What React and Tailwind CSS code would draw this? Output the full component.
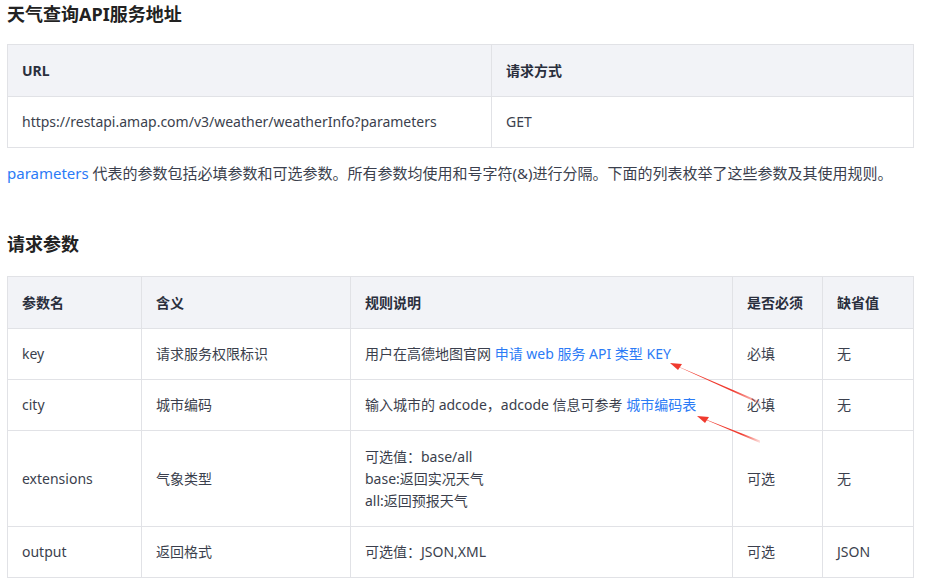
import React from 'react';

const font = { fontFamily: '"Noto Sans", "Noto Sans CJK SC", sans-serif' };

const params = [
  {
    name: 'key',
    meaning: '请求服务权限标识',
    rule: (
      <>
        用户在高德地图官网 <a className="text-[#2b7bf6]">申请 web 服务 API 类型 KEY</a>
      </>
    ),
    required: '必填',
    def: '无',
  },
  {
    name: 'city',
    meaning: '城市编码',
    rule: (
      <>
        输入城市的 adcode，adcode 信息可参考 <a className="text-[#2b7bf6]">城市编码表</a>
      </>
    ),
    required: '必填',
    def: '无',
  },
  {
    name: 'extensions',
    meaning: '气象类型',
    rule: (
      <>
        可选值：base/all
        <br />
        base:返回实况天气
        <br />
        all:返回预报天气
      </>
    ),
    required: '可选',
    def: '无',
    tall: true,
  },
  {
    name: 'output',
    meaning: '返回格式',
    rule: '可选值：JSON,XML',
    required: '可选',
    def: 'JSON',
  },
];

const th = 'border border-[#e1e2e6] bg-[#f2f3f7] px-[14px] h-[52px] text-left font-bold text-[#2a2f3d] text-[14px]';
const td = 'border border-[#e1e2e6] px-[14px] py-[14px] h-[51px] text-[14px] leading-[22px] text-[#3b3f4d]';
const tdTall = 'border border-[#e1e2e6] px-[14px] pt-[15px] pb-[14px] text-[14px] leading-[22px] text-[#3b3f4d]';

export default function App() {
  return (
    <div className="relative w-[934px] h-[587px] bg-white overflow-hidden" style={font}>
      <div className="pl-[7px] w-[914px]">
        <h2 className="text-[18px] font-bold leading-[28px] text-[#222]">天气查询API服务地址</h2>
        <table className="mt-[16px] w-[907px] border-collapse table-fixed">
          <colgroup>
            <col className="w-[484px]" />
            <col />
          </colgroup>
          <thead>
            <tr>
              <th className={th}>URL</th>
              <th className={th}>请求方式</th>
            </tr>
          </thead>
          <tbody>
            <tr>
              <td className={td}>https://restapi.amap.com/v3/weather/weatherInfo?parameters</td>
              <td className={td}>GET</td>
            </tr>
          </tbody>
        </table>

        <p className="mt-[14px] text-[15px] leading-[22px] text-[#3b3f4d] whitespace-nowrap">
          <span className="text-[#2b7bf6]">parameters</span> 代表的参数包括必填参数和可选参数。所有参数均使用和号字符(&amp;)进行分隔。下面的列表枚举了这些参数及其使用规则。
        </p>

        <h2 className="mt-[46px] text-[18px] font-bold leading-[28px] text-[#222]">请求参数</h2>

        <table className="mt-[18px] w-[907px] border-collapse table-fixed">
          <colgroup>
            <col className="w-[134px]" />
            <col className="w-[209px]" />
            <col className="w-[382px]" />
            <col className="w-[90px]" />
            <col />
          </colgroup>
          <thead>
            <tr>
              <th className={th}>参数名</th>
              <th className={th}>含义</th>
              <th className={th}>规则说明</th>
              <th className={th}>是否必须</th>
              <th className={th}>缺省值</th>
            </tr>
          </thead>
          <tbody>
            {params.map((p) => {
              const c = p.tall ? tdTall : td;
              return (
                <tr key={p.name}>
                  <td className={c}>{p.name}</td>
                  <td className={c}>{p.meaning}</td>
                  <td className={c}>{p.rule}</td>
                  <td className={c}>{p.required}</td>
                  <td className={c}>{p.def}</td>
                </tr>
              );
            })}
          </tbody>
        </table>
      </div>

      {/* annotation arrows drawn over the table */}
      <svg className="absolute left-0 top-0 pointer-events-none" width="934" height="587">
        <defs>
          <linearGradient id="fade1" x1="670" y1="363" x2="760" y2="403" gradientUnits="userSpaceOnUse">
            <stop offset="0" stopColor="#f03a2e" />
            <stop offset="0.7" stopColor="#f03a2e" />
            <stop offset="1" stopColor="#f03a2e" stopOpacity="0.15" />
          </linearGradient>
          <linearGradient id="fade2" x1="697" y1="416" x2="760" y2="442" gradientUnits="userSpaceOnUse">
            <stop offset="0" stopColor="#f03a2e" />
            <stop offset="0.7" stopColor="#f03a2e" />
            <stop offset="1" stopColor="#f03a2e" stopOpacity="0.15" />
          </linearGradient>
        </defs>
        <polygon points="670,363 760,401.5 760,404" fill="url(#fade1)" />
        <polygon points="670,363 682,364 678,370" fill="#f03a2e" />
        <polygon points="697,416 760,440.5 760,443" fill="url(#fade2)" />
        <polygon points="697,416 709,417 705,423" fill="#f03a2e" />
      </svg>
    </div>
  );
}
